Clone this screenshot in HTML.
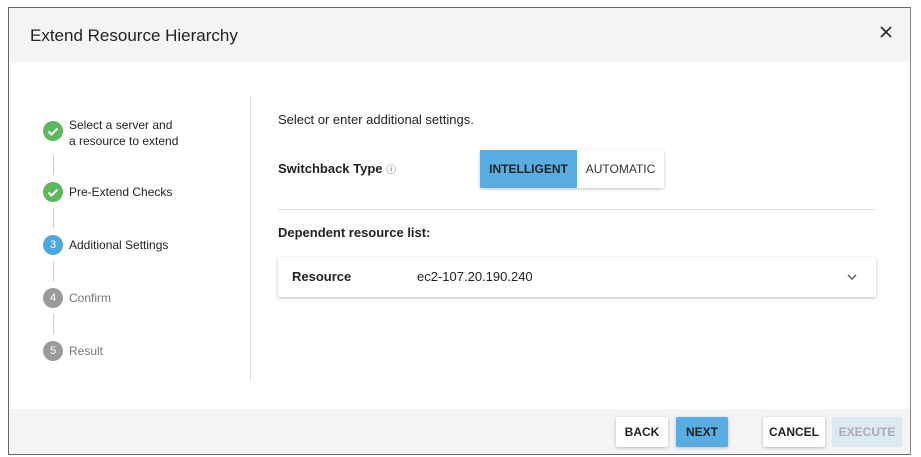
<!DOCTYPE html>
<html><head><style>
body{margin:0;width:921px;height:457px;background:#fff;font-family:"Liberation Sans",sans-serif;position:relative;overflow:hidden}
.dlg{position:absolute;left:8px;top:7px;width:901px;height:446px;border:1.5px solid #666;border-right-color:#888;background:#fff}
.hdr{position:absolute;left:0;top:0;right:0;height:54px;background:#f4f4f4}
.title{position:absolute;left:21px;top:18px;font-size:17px;color:#222}
.a{position:absolute}
.c{position:absolute;left:34px;width:20px;height:20px;border-radius:50%;color:#fff;font-size:11px;text-align:center;line-height:20px}
.g{background:#5cb85c}.b{background:#4ea7dc}.gr{background:#9a9a9a}
.ln{position:absolute;left:43.5px;width:1px;background:#ccc}
.lb{position:absolute;left:60px;font-size:12px;color:#222}
.btn{position:absolute;height:30px;line-height:30px;font-size:12px;font-weight:bold;text-align:center;background:#fff;box-shadow:0 1px 3px rgba(0,0,0,.25);border-radius:2px;color:#222}
.ftr{position:absolute;left:0;bottom:0;right:0;height:45px;background:#f4f4f4}
</style></head><body>
<div class="dlg">
<div class="hdr"><div class="title">Extend Resource Hierarchy</div>
<svg class="a" style="left:871px;top:18px" width="12" height="12"><path d="M1 1l10 10M11 1L1 11" stroke="#222" stroke-width="1.6"/></svg></div>
<div class="c g" style="top:113px"><svg width="20" height="20"><path d="M5.5 10.5l3 3 6-6" stroke="#fff" stroke-width="2" fill="none"/></svg></div>
<div class="lb" style="top:109px;line-height:16px">Select a server and<br>a resource to extend</div>
<div class="ln" style="top:147px;height:20px"></div>
<div class="c g" style="top:174px"><svg width="20" height="20"><path d="M5.5 10.5l3 3 6-6" stroke="#fff" stroke-width="2" fill="none"/></svg></div>
<div class="lb" style="top:177px">Pre-Extend Checks</div>
<div class="ln" style="top:200px;height:20px"></div>
<div class="c b" style="top:227px">3</div>
<div class="lb" style="top:230px">Additional Settings</div>
<div class="ln" style="top:253px;height:20px"></div>
<div class="c gr" style="top:280px">4</div>
<div class="lb" style="top:283px;color:#777">Confirm</div>
<div class="ln" style="top:306px;height:20px"></div>
<div class="c gr" style="top:333px">5</div>
<div class="lb" style="top:336px;color:#777">Result</div>
<div class="a" style="left:241px;top:88px;width:1px;height:285px;background:#ddd"></div>
<div class="a" style="left:269px;top:104px;font-size:13px;color:#222">Select or enter additional settings.</div>
<div class="a" style="left:269px;top:153px;font-size:13px;font-weight:bold;color:#222">Switchback Type <span style="font-weight:normal;font-size:10px;color:#555">ⓘ</span></div>
<div class="a" style="left:471px;top:142px;width:184px;height:38px;box-shadow:0 1px 3px rgba(0,0,0,.25);border-radius:2px;background:#fff;font-size:12px">
<div class="a" style="left:0;top:0;width:97px;height:38px;background:#58aee0;line-height:38px;text-align:center;font-weight:bold;color:#222">INTELLIGENT</div>
<div class="a" style="left:97px;top:0;width:87px;line-height:38px;text-align:center;color:#333">AUTOMATIC</div></div>
<div class="a" style="left:269px;top:201px;width:598px;height:1px;background:#e3e3e3"></div>
<div class="a" style="left:269px;top:217px;font-size:13px;font-weight:bold;color:#222">Dependent resource list:</div>
<div class="a" style="left:269px;top:249px;width:598px;height:40px;background:#fff;box-shadow:0 1px 3px rgba(0,0,0,.25);border-radius:2px">
<div class="a" style="left:14px;top:12px;font-size:13px;font-weight:bold;color:#222">Resource</div>
<div class="a" style="left:139px;top:12px;font-size:13px;color:#222">ec2-107.20.190.240</div>
<svg class="a" style="left:568px;top:15px" width="12" height="10"><path d="M2 3l4 4 4-4" stroke="#555" stroke-width="1.4" fill="none"/></svg></div>
<div class="ftr">
<div class="btn" style="left:607px;top:8px;width:52px">BACK</div>
<div class="btn" style="left:667px;top:8px;width:52px;background:#58aee0">NEXT</div>
<div class="btn" style="left:754px;top:8px;width:62px">CANCEL</div>
<div class="btn" style="left:823px;top:8px;width:70px;background:#dde9f1;color:#aab;box-shadow:none">EXECUTE</div>
</div>
</div>
</body></html>
